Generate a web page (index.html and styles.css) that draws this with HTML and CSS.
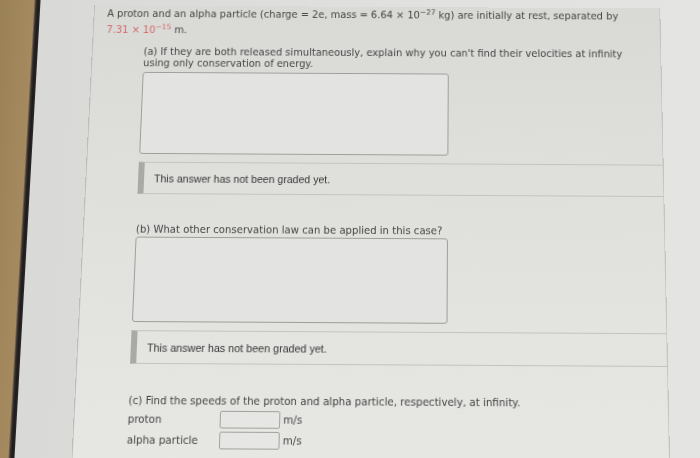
FILE: index.html
```html
<!DOCTYPE html>
<html>
<head>
<meta charset="utf-8">
<title>Proton and alpha particle</title>
<link rel="stylesheet" href="styles.css">
</head>
<body>
<div class="panel">
  <p class="intro">A proton and an alpha particle (charge = 2e, mass = 6.64 × 10<sup>−27</sup> kg) are initially at rest, separated by <span class="red">7.31 × 10<sup>−15</sup></span> m.</p>

  <div class="part">
    <p class="q qa">(a) If they are both released simultaneously, explain why you can't find their velocities at infinity using only conservation of energy.</p>
    <textarea class="essay"></textarea>
    <div class="feedback">This answer has not been graded yet.</div>
  </div>

  <div class="part">
    <p class="q qb">(b) What other conservation law can be applied in this case?</p>
    <textarea class="essay"></textarea>
    <div class="feedback">This answer has not been graded yet.</div>
  </div>

  <div class="part">
    <p class="q qc">(c) Find the speeds of the proton and alpha particle, respectively, at infinity.</p>
    <div class="ansgrid">
      <span class="lbl">proton</span><input class="num" type="text"><span class="unit">m/s</span>
      <span class="lbl">alpha particle</span><input class="num" type="text"><span class="unit">m/s</span>
    </div>
  </div>
</div>
</body>
</html>
```
FILE: styles.css
```css
html, body {
  margin: 0;
  padding: 0;
}

body {
  width: 700px;
  height: 458px;
  overflow: hidden;
  background: linear-gradient(93.26deg,
    #9a8056 0px, #a68a5f 34px, #3a3432 36px, #1f1b1b 38px, #2a2525 40px,
    #d9dad8 41px, #e1e2e0 60%, #e4e4e2 100%);
  font-family: "DejaVu Sans", Verdana, sans-serif;
}

.panel {
  box-sizing: border-box;
  margin-left: 83px;
  width: 582px;
  height: 472px;
  padding: 0 0 0 13px;
  border-left: 1px solid #bdbdba;
  border-right: 1px solid #c4c4c1;
  background: linear-gradient(#d9d9d6, #e0e0dd 45%, #e7e7e4);
  color: #444444;
  font-size: 10.1px;
  transform-origin: 290px 229px;
  transform: perspective(1000px) rotateX(7deg) rotate(0.33deg) skewX(-0.48deg);
}

.intro {
  margin: -1px 0 0;
  max-width: 535px;
  line-height: 17px;
}

sup {
  font-size: 7.6px;
  line-height: 0;
  vertical-align: 4px;
}

.red {
  color: #d26a6a;
}

.part {
  margin-left: 39px;
}

.q {
  margin: 0;
  line-height: 12px;
  max-width: 505px;
}

.qa { margin-top: 9px; }
.qb { margin-top: 30px; }
.qc { margin-top: 30px; }

.qa + .essay {
  margin-top: 3px;
}

.essay {
  display: block;
  box-sizing: border-box;
  width: 312px;
  height: 85px;
  margin: 3px 0 0;
  padding: 0;
  border: 1px solid #9e9e9b;
  border-radius: 3px;
  background: #e3e3e1;
  resize: none;
}

.qb + .essay {
  margin-top: 1px;
}

.feedback {
  box-sizing: border-box;
  height: 33px;
  margin-top: 8px;
  padding-left: 10px;
  display: flex;
  align-items: center;
  border-left: 6px solid #a9a9a6;
  border-top: 1px solid #c3c3c0;
  border-bottom: 1px solid #c3c3c0;
  font-family: "Liberation Sans", Arial, sans-serif;
  font-size: 10.6px;
  color: #363636;
}

.ansgrid {
  display: grid;
  grid-template-columns: 87px 59px auto;
  grid-auto-rows: 17px;
  row-gap: 3px;
  column-gap: 3px;
  align-items: center;
  margin-top: 3px;
}

.num {
  box-sizing: border-box;
  width: 59px;
  height: 17px;
  margin: 0;
  padding: 0;
  border: 1px solid #a3a3a0;
  border-radius: 2px;
  background: #e6e6e4;
}

.lbl, .unit {
  line-height: 12px;
}
```
